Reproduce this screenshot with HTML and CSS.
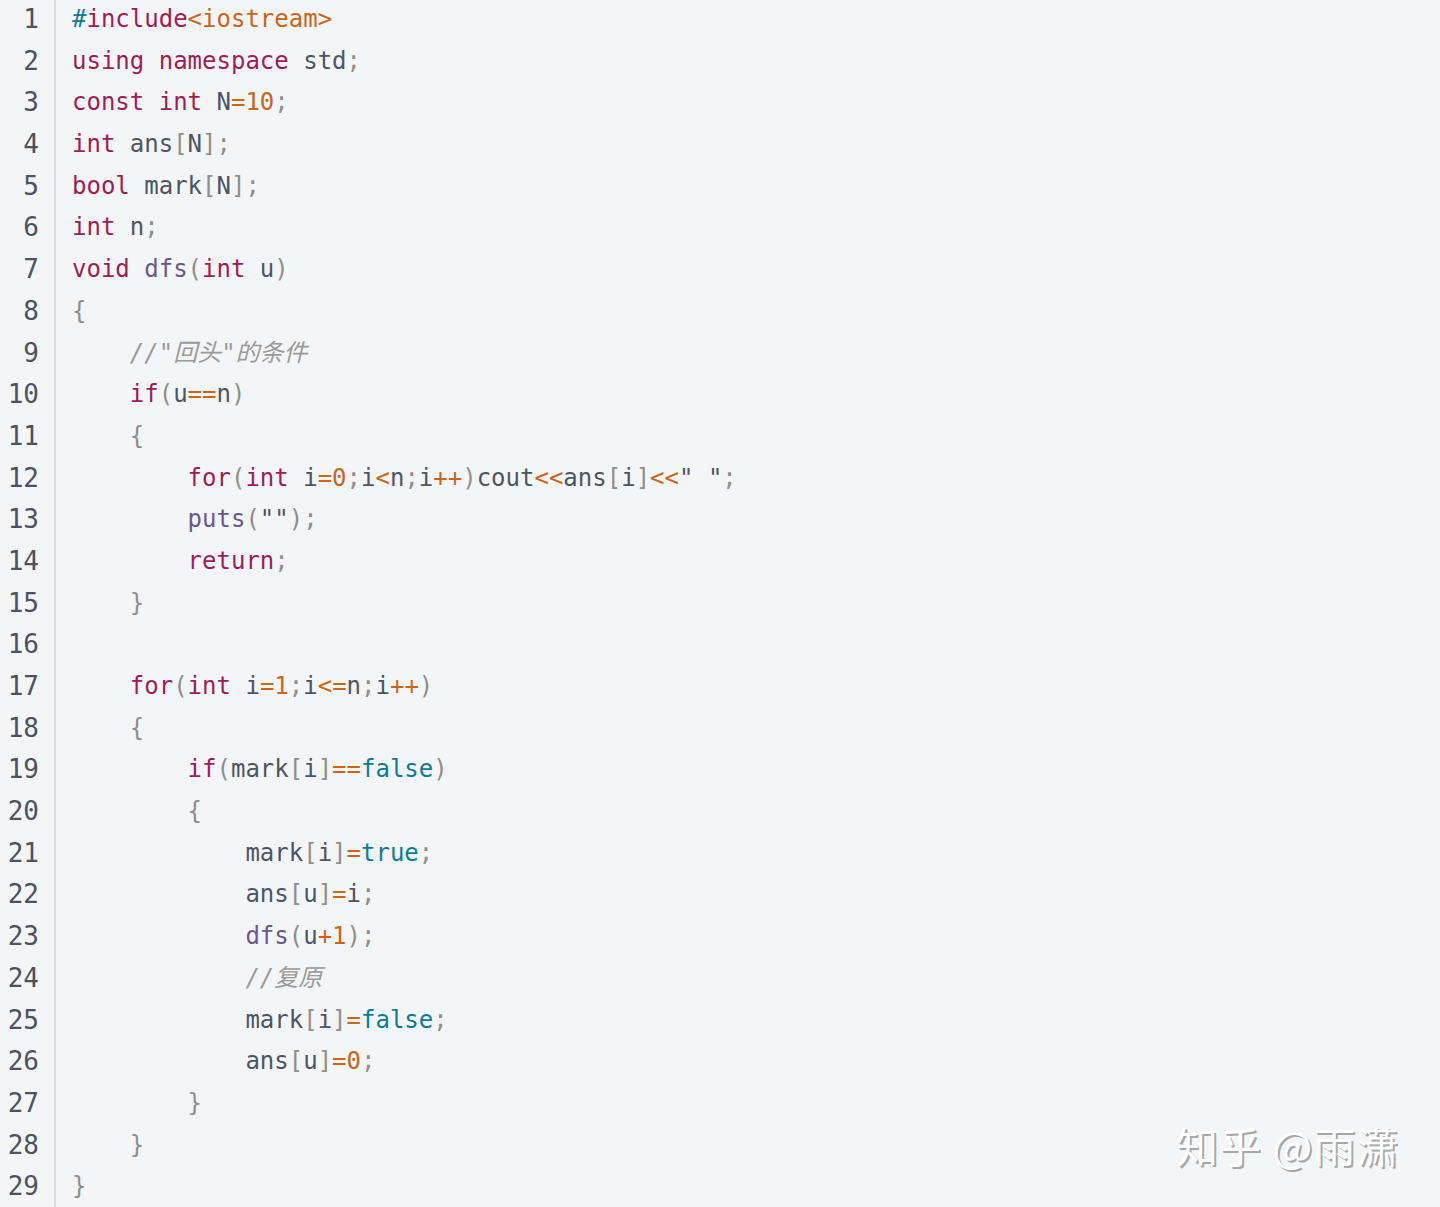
FILE: index.html
```html
<!DOCTYPE html>
<html lang="zh">
<head>
<meta charset="utf-8">
<title>code</title>
<link rel="stylesheet" href="styles.css">
</head>
<body>
<div class="block">
<div class="gutter">
<div>1</div><div>2</div><div>3</div><div>4</div><div>5</div><div>6</div><div>7</div><div>8</div><div>9</div><div>10</div><div>11</div><div>12</div><div>13</div><div>14</div><div>15</div><div>16</div><div>17</div><div>18</div><div>19</div><div>20</div><div>21</div><div>22</div><div>23</div><div>24</div><div>25</div><div>26</div><div>27</div><div>28</div><div>29</div>
</div>
<pre class="code"><span class="m">#</span><span class="k">include</span><span class="o">&lt;iostream&gt;</span>
<span class="k">using namespace</span> std<span class="p">;</span>
<span class="k">const int</span> N<span class="o">=10</span><span class="p">;</span>
<span class="k">int</span> ans<span class="p">[</span>N<span class="p">];</span>
<span class="k">bool</span> mark<span class="p">[</span>N<span class="p">];</span>
<span class="k">int</span> n<span class="p">;</span>
<span class="k">void</span> <span class="f">dfs</span><span class="p">(</span><span class="k">int</span> u<span class="p">)</span>
<span class="p">{</span>
    <span class="c">//"回头"的条件</span>
    <span class="k">if</span><span class="p">(</span>u<span class="o">==</span>n<span class="p">)</span>
    <span class="p">{</span>
        <span class="k">for</span><span class="p">(</span><span class="k">int</span> i<span class="o">=0</span><span class="p">;</span>i<span class="o">&lt;</span>n<span class="p">;</span>i<span class="o">++</span><span class="p">)</span>cout<span class="o">&lt;&lt;</span>ans<span class="p">[</span>i<span class="p">]</span><span class="o">&lt;&lt;</span>" "<span class="p">;</span>
        <span class="f">puts</span><span class="p">(</span>""<span class="p">);</span>
        <span class="k">return</span><span class="p">;</span>
    <span class="p">}</span>

    <span class="k">for</span><span class="p">(</span><span class="k">int</span> i<span class="o">=1</span><span class="p">;</span>i<span class="o">&lt;=</span>n<span class="p">;</span>i<span class="o">++</span><span class="p">)</span>
    <span class="p">{</span>
        <span class="k">if</span><span class="p">(</span>mark<span class="p">[</span>i<span class="p">]</span><span class="o">==</span><span class="b">false</span><span class="p">)</span>
        <span class="p">{</span>
            mark<span class="p">[</span>i<span class="p">]</span><span class="o">=</span><span class="b">true</span><span class="p">;</span>
            ans<span class="p">[</span>u<span class="p">]</span><span class="o">=</span>i<span class="p">;</span>
            <span class="f">dfs</span><span class="p">(</span>u<span class="o">+1</span><span class="p">);</span>
            <span class="c">//复原</span>
            mark<span class="p">[</span>i<span class="p">]</span><span class="o">=</span><span class="b">false</span><span class="p">;</span>
            ans<span class="p">[</span>u<span class="p">]</span><span class="o">=0</span><span class="p">;</span>
        <span class="p">}</span>
    <span class="p">}</span>
<span class="p">}</span></pre>
</div>
<div class="watermark">知乎 @雨潇</div>
</body>
</html>
```
FILE: styles.css
```css
html, body {
  margin: 0;
  padding: 0;
  background: #f4f5f7;
  height: 100%;
  overflow: hidden;
}
.block {
  display: flex;
  margin-top: -1px;
  font-family: "DejaVu Sans Mono", "Liberation Mono", "Noto Sans CJK SC", monospace;
  font-size: 24px;
  line-height: 41.68px;
}
.gutter {
  width: 39px;
  padding-right: 15px;
  border-right: 2px solid #dcdee2;
  text-align: right;
  color: #4b5263;
  font-size: 26px;
  height: 1220px;
}
.code {
  margin: 0;
  padding-left: 16px;
  font: inherit;
  color: #4c5568;
  white-space: pre;
}
.k { color: #9d1e57; }
.p { color: #8e8e8e; }
.o { color: #c9661c; }
.b { color: #0d7b96; }
.m { color: #0d7b96; }
.f { color: #6a578f; }
.c { color: #9a9a9a; font-style: italic; font-family: "DejaVu Sans Mono", "Noto Sans CJK SC", monospace; }
.watermark {
  position: absolute;
  left: 1176px;
  top: 1116px;
  font-family: "Noto Sans CJK SC", sans-serif;
  font-size: 42px;
  line-height: 58px;
  letter-spacing: 1px;
  color: #ffffff;
  text-shadow: 2px 2px 0 #a8a8a8;
  white-space: nowrap;
}
```
